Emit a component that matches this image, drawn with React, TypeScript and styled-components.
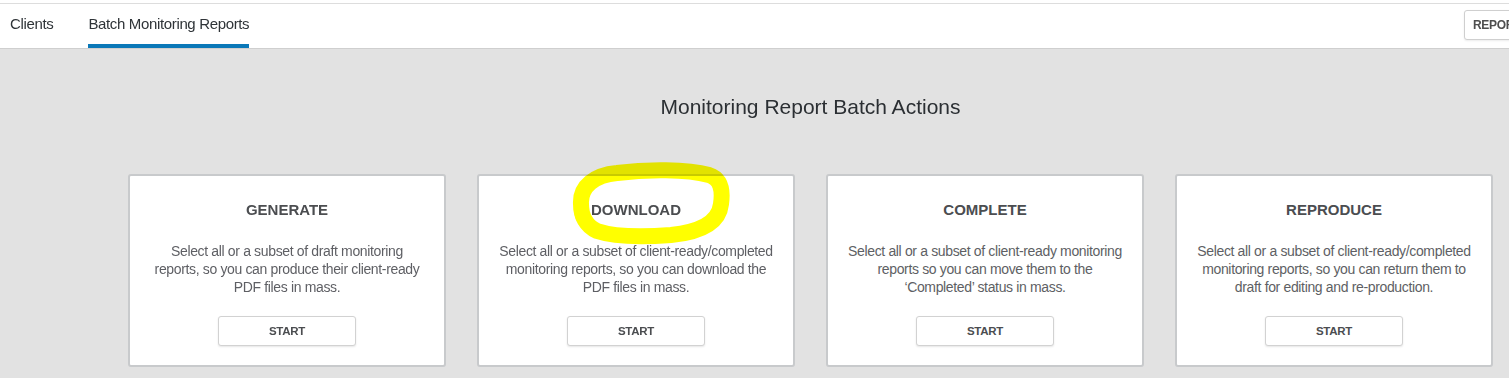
import React from 'react'
import styled, { createGlobalStyle } from 'styled-components'

const GlobalStyle = createGlobalStyle`
  html, body {
    margin: 0;
    padding: 0;
    background: #ffffff;
    overflow: hidden;
  }
  body {
    font-family: 'Liberation Sans', Arial, sans-serif;
    color: #333333;
  }
`

interface Action {
  title: string
  lines: string[]
  highlight?: boolean
}

const actions: Action[] = [
  {
    title: 'GENERATE',
    lines: [
      'Select all or a subset of draft monitoring',
      'reports, so you can produce their client-ready',
      'PDF files in mass.',
    ],
  },
  {
    title: 'DOWNLOAD',
    highlight: true,
    lines: [
      'Select all or a subset of client-ready/completed',
      'monitoring reports, so you can download the',
      'PDF files in mass.',
    ],
  },
  {
    title: 'COMPLETE',
    lines: [
      'Select all or a subset of client-ready monitoring',
      'reports so you can move them to the',
      '\u2018Completed\u2019 status in mass.',
    ],
  },
  {
    title: 'REPRODUCE',
    lines: [
      'Select all or a subset of client-ready/completed',
      'monitoring reports, so you can return them to',
      'draft for editing and re-production.',
    ],
  },
]

const Page = styled.div`
  width: 1621px;
  min-height: 378px;
  background: #e2e2e2;
`

const TopStrip = styled.div`
  height: 3px;
  background: #ffffff;
`

const TabBar = styled.nav`
  display: flex;
  align-items: stretch;
  height: 44px;
  padding: 0 0 0 10px;
  background: #ffffff;
  border-top: 1px solid #dddddd;
  border-bottom: 1px solid #cfcfcf;
`

const Tab = styled.a<{ $active?: boolean }>`
  display: flex;
  align-items: center;
  margin-right: 35px;
  padding-bottom: 1px;
  font-size: 15px;
  letter-spacing: -0.35px;
  color: #2f3438;
  text-decoration: none;
  border-bottom: 4px solid ${(p) => (p.$active ? '#0a78b8' : 'transparent')};
  box-sizing: border-box;
  cursor: pointer;
`

const TabActions = styled.div`
  margin-left: auto;
  width: 157px;
  display: flex;
  align-items: flex-start;
  padding-top: 6px;
`

const ReportsButton = styled.button`
  height: 30px;
  padding: 0 8px;
  font-family: 'Liberation Sans', Arial, sans-serif;
  font-size: 12px;
  letter-spacing: -0.3px;
  font-weight: 700;
  color: #4e4e4e;
  background: #ffffff;
  border: 1px solid #cfcfcf;
  border-radius: 3px;
  box-shadow: 0 1px 2px rgba(0, 0, 0, 0.08);
`

const Main = styled.main`
  padding: 46px 128px 0;
`

const Title = styled.h1`
  margin: 0;
  font-family: 'Liberation Sans', Arial, sans-serif;
  font-size: 21px;
  line-height: 24px;
  font-weight: 400;
  text-align: center;
  color: #2b2f33;
`

const CardGrid = styled.div`
  display: grid;
  grid-template-columns: repeat(4, 318px);
  gap: 31px;
  margin-top: 55px;
`

const Card = styled.section`
  position: relative;
  display: flex;
  flex-direction: column;
  align-items: center;
  box-sizing: border-box;
  padding: 25px 10px 19px;
  background: #ffffff;
  border: 2px solid #c8cacc;
  border-radius: 3px;
`

const CardTitle = styled.h2`
  margin: 0;
  font-size: 15px;
  line-height: 18px;
  font-weight: 700;
  color: #4b4d50;
`

const CardText = styled.p`
  margin: 23px 0 0;
  font-size: 14px;
  letter-spacing: -0.35px;
  line-height: 18px;
  text-align: center;
  color: #5e5f64;
  white-space: nowrap;
`

const StartButton = styled.button`
  width: 138px;
  height: 30px;
  margin-top: 20px;
  font-family: 'Liberation Sans', Arial, sans-serif;
  font-size: 11.5px;
  letter-spacing: -0.3px;
  font-weight: 700;
  color: #4b4d50;
  background: #ffffff;
  border: 1px solid #d2d2d2;
  border-radius: 3px;
  box-shadow: 0 1px 2px rgba(0, 0, 0, 0.1);
  cursor: pointer;
`

const Marker = styled.svg`
  position: absolute;
  left: 92px;
  top: -12px;
  width: 160px;
  height: 82px;
  overflow: visible;
  mix-blend-mode: multiply;
  pointer-events: none;
`

const Highlight = () => (
  <Marker viewBox="0 0 160 82">
    <path
      d="M10,40 C9,22 24,11 46,9 C76,5 116,5 138,11 C150,15 152,26 150,40 C148,58 130,68 100,71 C74,73 44,73 26,67 C15,62 10,52 10,40 Z"
      fill="none"
      stroke="#ffff00"
      strokeWidth="16"
      strokeLinecap="round"
      strokeLinejoin="round"
    />
    <path d="M10,52 C6,36 12,18 30,12" fill="none" stroke="#ffff00" strokeWidth="12" strokeLinecap="round" />
  </Marker>
)

const App = (): JSX.Element => (
  <Page>
    <GlobalStyle />
    <TopStrip />
    <TabBar>
      <Tab>Clients</Tab>
      <Tab $active>Batch Monitoring Reports</Tab>
      <TabActions>
        <ReportsButton>REPORTS</ReportsButton>
      </TabActions>
    </TabBar>
    <Main>
      <Title>Monitoring Report Batch Actions</Title>
      <CardGrid>
        {actions.map((action) => (
          <Card key={action.title}>
            {action.highlight && <Highlight />}
            <CardTitle>{action.title}</CardTitle>
            <CardText>
              {action.lines.map((line, i) => (
                <React.Fragment key={line}>
                  {i > 0 && <br />}
                  {line}
                </React.Fragment>
              ))}
            </CardText>
            <StartButton>START</StartButton>
          </Card>
        ))}
      </CardGrid>
    </Main>
  </Page>
)

export default App
